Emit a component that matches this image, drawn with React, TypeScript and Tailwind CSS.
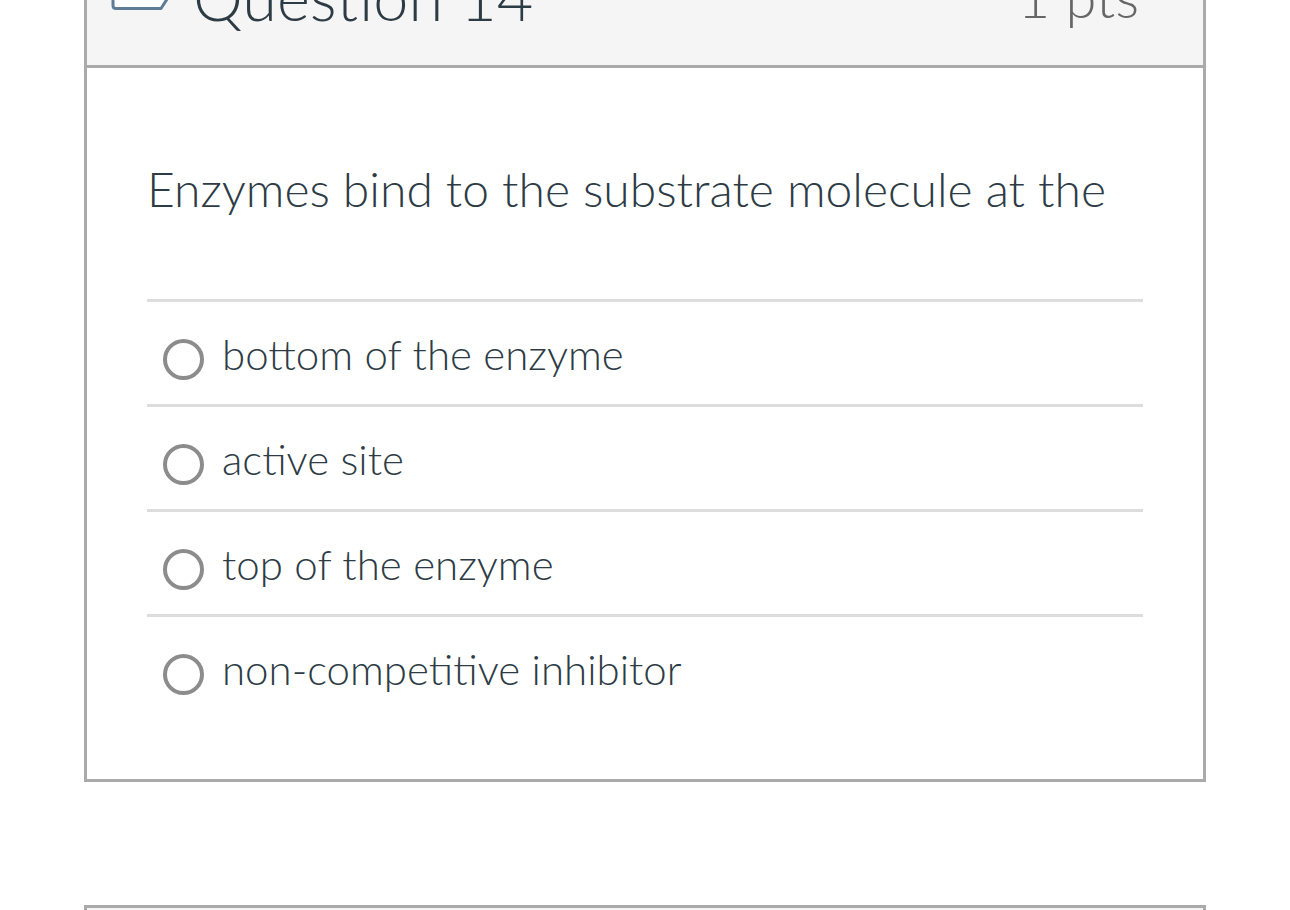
import React from 'react';

const answers = [
  'bottom of the enzyme',
  'active site',
  'top of the enzyme',
  'non-competitive inhibitor',
];

function FlagIcon() {
  return (
    <svg width="62" height="26" viewBox="0 0 62 26" className="shrink-0">
      <path
        d="M2 0 V21.5 Q2 24.5 5 24.5 H50 L60 9 L54 0"
        fill="#ffffff"
        stroke="#5b7d97"
        strokeWidth={3}
        strokeLinejoin="round"
      />
    </svg>
  );
}

function AnswerRow({ label }: { label: string }) {
  return (
    <div className="border-t-[3px] border-[#dddddd] h-[105px] pt-[32px] flex items-start">
      <span className="ml-[16px] mt-[5px] w-[41px] h-[41px] rounded-full border-[4px] border-[#8c8c8c] bg-white shrink-0" />
      <span className="ml-[18px] text-[42px] leading-[41px] font-light text-[#2d3b45]">{label}</span>
    </div>
  );
}

export default function App() {
  return (
    <div
      className="min-h-screen bg-white overflow-hidden"
      style={{ fontFamily: 'Lato, "Noto Sans", sans-serif' }}
    >
      <div className="mx-[84px] -mt-[75px] flex flex-col gap-[123px]">
        <div className="border-[3px] border-[#aaaaaa] bg-white">
          <div className="bg-[#f5f5f5] border-b-[3px] border-[#aaaaaa] py-[37px] pl-[24px] pr-[64px] flex items-center justify-between">
            <div className="flex items-center gap-[20px]">
              <FlagIcon />
              <span className="text-[63px] leading-none font-light text-[#2d3b45]">Question 14</span>
            </div>
            <span className="text-[56px] leading-none font-light text-[#666666]">1 pts</span>
          </div>
          <div className="px-[60px] pt-[85px] pb-[60px]">
            <p className="text-[48px] leading-[1.5] font-light text-[#2d3b45] mb-[74px]">
              Enzymes bind to the substrate molecule at the
            </p>
            <div className="flex flex-col">
              {answers.map((a) => (
                <AnswerRow key={a} label={a} />
              ))}
            </div>
          </div>
        </div>
        <div className="border-[3px] border-b-0 border-[#aaaaaa]">
          <div className="bg-[#f5f5f5] h-[200px]" />
        </div>
      </div>
    </div>
  );
}
